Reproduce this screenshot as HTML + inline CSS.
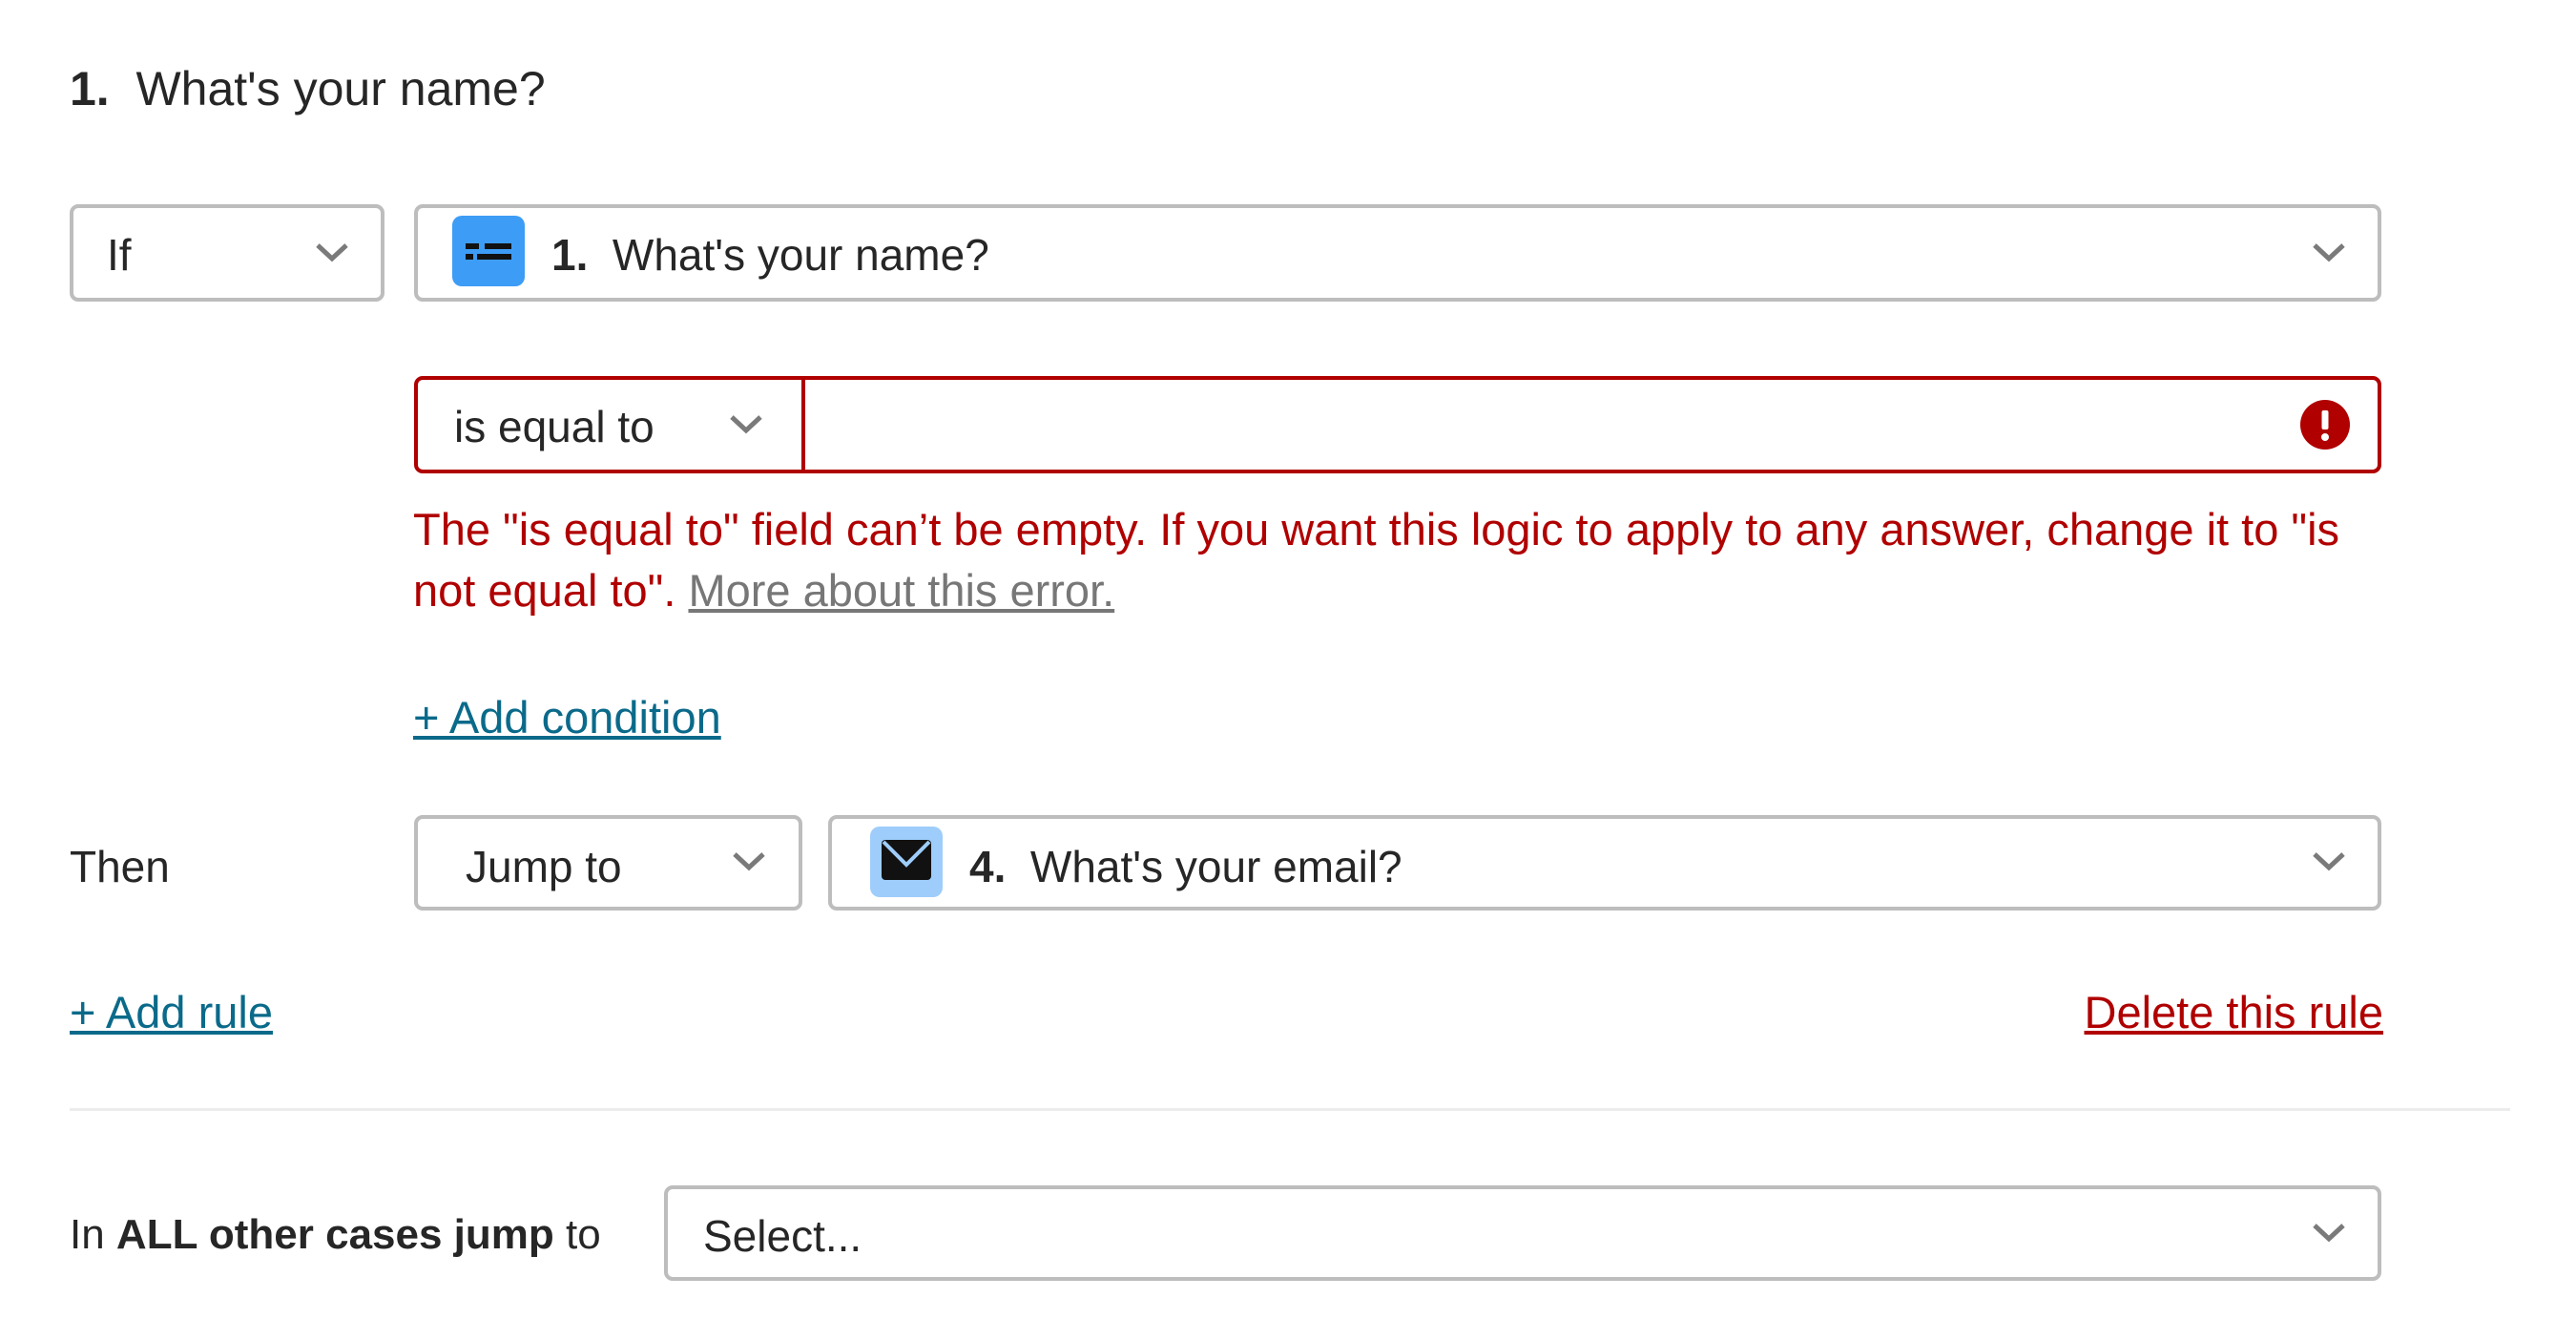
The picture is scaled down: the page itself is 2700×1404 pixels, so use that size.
<!DOCTYPE html>
<html><head><meta charset="utf-8"><style>
*{box-sizing:border-box;margin:0;padding:0}
body{width:2700px;height:1404px;background:#fff;font-family:"Liberation Sans",Arial,sans-serif;color:#262626;position:relative;overflow:hidden}
.a{position:absolute}
.box{position:absolute;border:4px solid #bdbdbd;border-radius:9px;background:#fff}
.t{position:absolute;font-size:46px;line-height:1;white-space:nowrap}
.chev{position:absolute;width:40px;height:24px}
a{color:inherit}
</style></head><body>
<div class="t" style="left:73px;top:68px;font-size:50px"><b>1.</b>&nbsp; What's your name?</div>

<div class="box" style="left:73px;top:214px;width:330px;height:102px"></div>
<div class="t" style="left:112px;top:244px">If</div>
<svg class="chev" style="left:328px;top:252px" viewBox="0 0 40 24"><path d="M5 5 L20 19 L35 5" fill="none" stroke="#7a7a7a" stroke-width="5"/></svg>

<div class="box" style="left:434px;top:214px;width:2062px;height:102px"></div>
<div class="a" style="left:474px;top:226px;width:76px;height:74px;background:#3d9cf5;border-radius:10px"></div>
<svg class="a" style="left:474px;top:226px" width="76" height="74" viewBox="0 0 76 74"><g fill="#111"><rect x="14" y="29" width="14" height="6"/><rect x="34" y="29" width="28" height="6"/><rect x="14" y="40" width="8" height="6"/><rect x="26" y="40" width="36" height="6"/></g></svg>
<div class="t" style="left:578px;top:244px"><b>1.</b>&nbsp; What's your name?</div>
<svg class="chev" style="left:2421px;top:252px" viewBox="0 0 40 24"><path d="M5 5 L20 19 L35 5" fill="none" stroke="#7a7a7a" stroke-width="5"/></svg>

<div class="a" style="left:434px;top:394px;width:2062px;height:102px;border:4px solid #b00000;border-radius:9px"></div>
<div class="a" style="left:840px;top:394px;width:4px;height:102px;background:#b00000"></div>
<div class="t" style="left:476px;top:424px">is equal to</div>
<svg class="chev" style="left:762px;top:432px" viewBox="0 0 40 24"><path d="M5 5 L20 19 L35 5" fill="none" stroke="#7a7a7a" stroke-width="5"/></svg>
<svg class="a" style="left:2411px;top:419px" width="52" height="52" viewBox="0 0 52 52"><circle cx="26" cy="26" r="26" fill="#b00000"/><rect x="22.5" y="11" width="7" height="20" rx="2" fill="#fff"/><circle cx="26" cy="39" r="4" fill="#fff"/></svg>

<div class="t" style="left:433px;top:523px;color:#b00000;font-size:47px;line-height:64px">The "is equal to" field can’t be empty. If you want this logic to apply to any answer, change it to "is<br>not equal to". <a style="color:#777" href="#">More about this error.</a></div>

<div class="t" style="left:433px;top:728px;color:#0b6a8a;font-size:47px"><a href="#">+ Add condition</a></div>

<div class="t" style="left:73px;top:885px">Then</div>
<div class="box" style="left:434px;top:854px;width:407px;height:100px"></div>
<div class="t" style="left:488px;top:885px">Jump to</div>
<svg class="chev" style="left:765px;top:890px" viewBox="0 0 40 24"><path d="M5 5 L20 19 L35 5" fill="none" stroke="#7a7a7a" stroke-width="5"/></svg>
<div class="box" style="left:868px;top:854px;width:1628px;height:100px"></div>
<div class="a" style="left:912px;top:866px;width:76px;height:74px;background:#9ecdfb;border-radius:10px"></div>
<svg class="a" style="left:912px;top:866px" width="76" height="74" viewBox="0 0 76 74"><rect x="12" y="14" width="52" height="42" rx="4" fill="#111"/><path d="M14 16 L38 40 L62 16" fill="none" stroke="#9ecdfb" stroke-width="4"/></svg>
<div class="t" style="left:1016px;top:885px"><b>4.</b>&nbsp; What's your email?</div>
<svg class="chev" style="left:2421px;top:890px" viewBox="0 0 40 24"><path d="M5 5 L20 19 L35 5" fill="none" stroke="#7a7a7a" stroke-width="5"/></svg>

<div class="t" style="left:73px;top:1037px;color:#0b6a8a;font-size:47px"><a href="#">+ Add rule</a></div>
<div class="t" style="right:202px;top:1037px;color:#b00000;font-size:47px"><a href="#">Delete this rule</a></div>

<div class="a" style="left:73px;top:1161px;width:2558px;height:3px;background:#ececec"></div>

<div class="t" style="left:73px;top:1272px;font-size:44px">In <b>ALL other cases jump</b> to</div>
<div class="box" style="left:696px;top:1242px;width:1800px;height:100px"></div>
<div class="t" style="left:737px;top:1272px">Select...</div>
<svg class="chev" style="left:2421px;top:1279px" viewBox="0 0 40 24"><path d="M5 5 L20 19 L35 5" fill="none" stroke="#7a7a7a" stroke-width="5"/></svg>
</body></html>
